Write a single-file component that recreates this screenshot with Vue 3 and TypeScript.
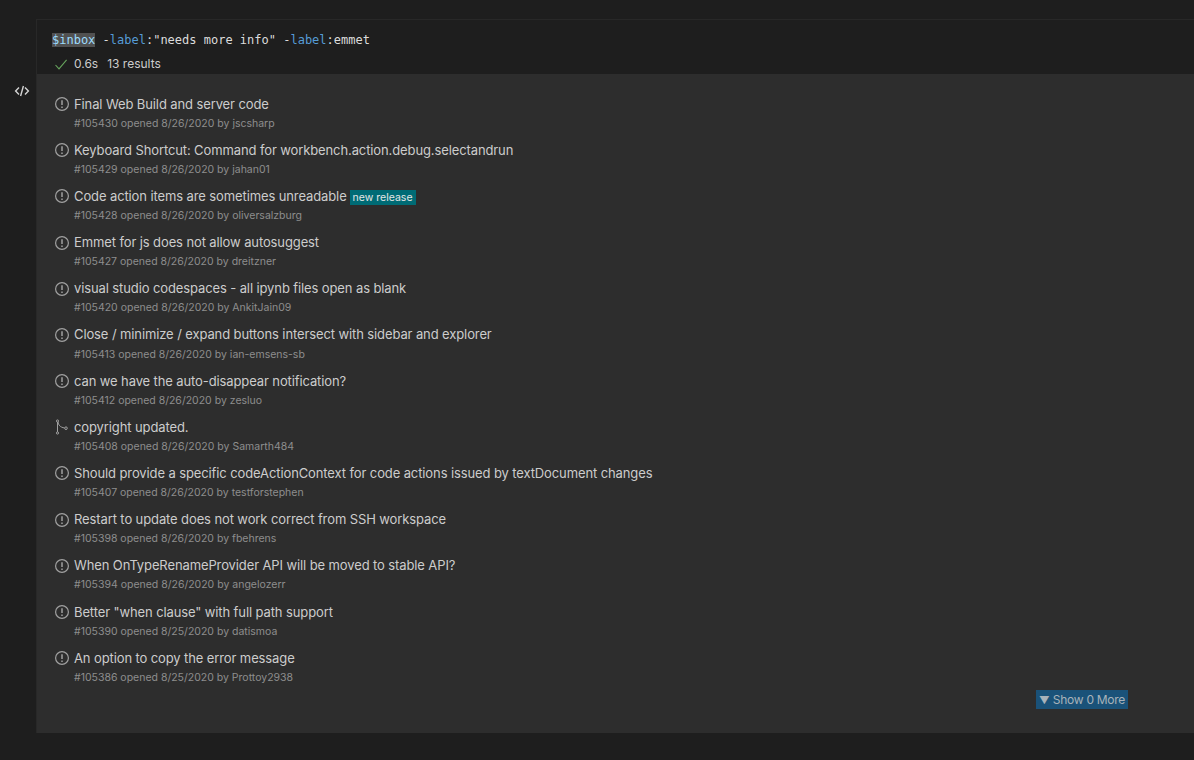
<script setup lang="ts">
interface Issue {
  title: string
  number: number
  date: string
  author: string
  kind?: 'pr'
  label?: string
}

const issues: Issue[] = [
  { title: 'Final Web Build and server code', number: 105430, date: '8/26/2020', author: 'jscsharp' },
  { title: 'Keyboard Shortcut: Command for workbench.action.debug.selectandrun', number: 105429, date: '8/26/2020', author: 'jahan01' },
  { title: 'Code action items are sometimes unreadable', number: 105428, date: '8/26/2020', author: 'oliversalzburg', label: 'new release' },
  { title: 'Emmet for js does not allow autosuggest', number: 105427, date: '8/26/2020', author: 'dreitzner' },
  { title: 'visual studio codespaces - all ipynb files open as blank', number: 105420, date: '8/26/2020', author: 'AnkitJain09' },
  { title: 'Close / minimize / expand buttons intersect with sidebar and explorer', number: 105413, date: '8/26/2020', author: 'ian-emsens-sb' },
  { title: 'can we have the auto-disappear notification?', number: 105412, date: '8/26/2020', author: 'zesluo' },
  { title: 'copyright updated.', number: 105408, date: '8/26/2020', author: 'Samarth484', kind: 'pr' },
  { title: 'Should provide a specific codeActionContext for code actions issued by textDocument changes', number: 105407, date: '8/26/2020', author: 'testforstephen' },
  { title: 'Restart to update does not work correct from SSH workspace', number: 105398, date: '8/26/2020', author: 'fbehrens' },
  { title: 'When OnTypeRenameProvider API will be moved to stable API?', number: 105394, date: '8/26/2020', author: 'angelozerr' },
  { title: 'Better "when clause" with full path support', number: 105390, date: '8/25/2020', author: 'datismoa' },
  { title: 'An option to copy the error message', number: 105386, date: '8/25/2020', author: 'Prottoy2938' },
]
</script>

<template>
  <div class="page">
    <div class="gutter">
      <svg class="code-icon" width="16" height="16" viewBox="0 0 16 16" fill="none" stroke="#d4d4d4" stroke-width="1.4">
        <path d="M5 4.5 1.6 8 5 11.5M11 4.5 14.4 8 11 11.5M9.4 3 6.6 13" />
      </svg>
    </div>
    <main class="cell">
      <header class="input">
        <div class="query">
          <span class="sel">$inbox</span> -<span class="key">label</span>:"needs more info" -<span class="key">label</span>:emmet
        </div>
        <div class="status">
          <svg width="16" height="16" viewBox="0 0 16 16" fill="none" stroke="#66a35c" stroke-width="1.1">
            <path d="M1.5 9 5 12.8 12.6 3.8" />
          </svg>
          <span>0.6s</span>
          <span>13 results</span>
        </div>
      </header>
      <section class="output">
        <ul class="list">
          <li v-for="issue in issues" :key="issue.number" class="row">
            <svg v-if="issue.kind === 'pr'" class="state" width="16" height="16" viewBox="0 0 16 16" fill="none" stroke="#a0a0a0" stroke-width="1">
              <path d="M3.5 3V13M4 3C4.5 6 6 8.2 10.6 9" />
              <circle cx="3.5" cy="2" r="1.1" />
              <circle cx="3.5" cy="14" r="1.1" />
              <circle cx="12" cy="9.2" r="1.3" />
            </svg>
            <svg v-else class="state" width="16" height="16" viewBox="0 0 16 16" fill="none" stroke="#a0a0a0">
              <circle cx="8" cy="8" r="6.4" stroke-width="1.2" />
              <path d="M8 4.2V9" stroke-width="1.5" />
              <path d="M8 10.4V12" stroke-width="1.5" />
            </svg>
            <div class="text">
              <div class="title">
                {{ issue.title }}<span v-if="issue.label" class="label">{{ issue.label }}</span>
              </div>
              <div class="meta">#{{ issue.number }} opened {{ issue.date }} by {{ issue.author }}</div>
            </div>
          </li>
        </ul>
        <div class="more-row">
          <button class="more"><span class="arrow">▼</span> Show 0 More</button>
        </div>
      </section>
    </main>
  </div>
</template>

<style scoped>
.page {
  height: 760px;
  box-sizing: border-box;
  padding: 19px 0 27px;
  display: flex;
  background: #1e1e1e;
  font-family: Inter, "Liberation Sans", sans-serif;
  overflow: hidden;
}

.gutter {
  width: 36px;
  flex: none;
  padding-top: 64px;
  box-sizing: border-box;
  display: flex;
  justify-content: center;
  align-items: flex-start;
}

.code-icon {
  margin-left: 8px;
}

.cell {
  flex: 1;
  display: flex;
  flex-direction: column;
  border-top: 1px solid #282828;
  border-left: 1px solid #282828;
}

.input {
  height: 54px;
  flex: none;
  padding: 11px 0 0 15px;
  box-sizing: border-box;
}

.query {
  font-family: "DejaVu Sans Mono", monospace;
  font-size: 12px;
  line-height: 18px;
  color: #dcdcdc;
  white-space: pre;
}

.sel {
  background: #515151;
  color: #9cdcfe;
}

.key {
  color: #569cd6;
}

.status {
  display: flex;
  align-items: center;
  margin-top: 7px;
  gap: 8px;
  font-size: 12px;
  line-height: 16px;
  color: #cccccc;
}

.status svg {
  margin-right: -4px;
  margin-left: 2px;
}

.status span + span {
  margin-left: 1px;
}

.output {
  flex: 1;
  background: #2d2d2d;
  padding: 19.63px 66px 0 17px;
  min-height: 0;
}

.list {
  list-style: none;
  margin: 0;
  padding: 0;
}

.row {
  display: flex;
  height: 46.18px;
  gap: 4px;
}

.state {
  flex: none;
  margin-top: 2.36px;
}

.title {
  font-size: 13px;
  line-height: 20px;
  letter-spacing: -0.11px;
  color: #cccccc;
  white-space: nowrap;
}

.meta {
  margin-top: 1.1px;
  font-size: 10.5px;
  line-height: 18px;
  color: #8e8e8e;
  white-space: nowrap;
}

.label {
  display: inline-block;
  margin-left: 3px;
  padding: 0 3px;
  font-size: 10.5px;
  line-height: 15px;
  letter-spacing: 0;
  background: #006b75;
  color: #e6e6e6;
}

.more-row {
  display: flex;
  justify-content: flex-end;
  margin-top: -3.55px;
}

.more {
  border: 0;
  margin: 0;
  padding: 0 3px;
  height: 19px;
  font: inherit;
  font-size: 12px;
  line-height: 19px;
  letter-spacing: -0.28px;
  background: #1a5279;
  color: #a8b2ba;
}

.arrow {
  font-size: 10.5px;
  letter-spacing: 0;
}
</style>

<style>
html, body {
  margin: 0;
  background: #1e1e1e;
}
</style>
